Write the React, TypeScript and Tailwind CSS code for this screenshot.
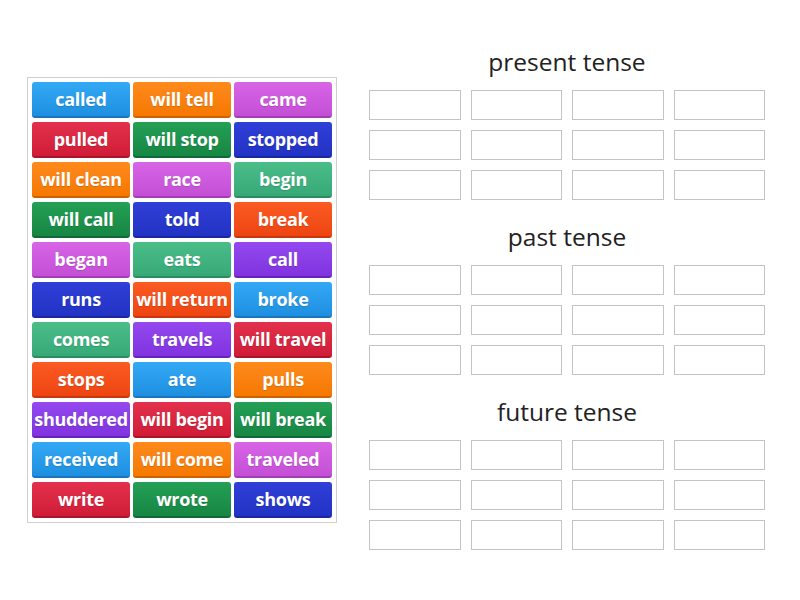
import React from 'react'

type Tone = 'blue' | 'orange' | 'pink' | 'red' | 'green' | 'navy' | 'teal' | 'flame' | 'violet'

const TONES: Record<Tone, string> = {
  blue: 'bg-gradient-to-b from-[#33a9f5] to-[#1e8fe0] border-b-[#1a75bf]',
  orange: 'bg-gradient-to-b from-[#ff8a1c] to-[#f57800] border-b-[#cf6200]',
  pink: 'bg-gradient-to-b from-[#d765e6] to-[#c44fd6] border-b-[#a33db3]',
  red: 'bg-gradient-to-b from-[#e3304c] to-[#d01c37] border-b-[#ab152c]',
  green: 'bg-gradient-to-b from-[#24a055] to-[#178644] border-b-[#116a35]',
  navy: 'bg-gradient-to-b from-[#3040d8] to-[#2232c4] border-b-[#1a27a0]',
  teal: 'bg-gradient-to-b from-[#4bbd89] to-[#37a978] border-b-[#2b8b61]',
  flame: 'bg-gradient-to-b from-[#fb5a22] to-[#ee4512] border-b-[#c7370b]',
  violet: 'bg-gradient-to-b from-[#9448ee] to-[#8033e0] border-b-[#6525b8]',
}

const TILES: [string, Tone][] = [
  ['called', 'blue'], ['will tell', 'orange'], ['came', 'pink'],
  ['pulled', 'red'], ['will stop', 'green'], ['stopped', 'navy'],
  ['will clean', 'orange'], ['race', 'pink'], ['begin', 'teal'],
  ['will call', 'green'], ['told', 'navy'], ['break', 'flame'],
  ['began', 'pink'], ['eats', 'teal'], ['call', 'violet'],
  ['runs', 'navy'], ['will return', 'flame'], ['broke', 'blue'],
  ['comes', 'teal'], ['travels', 'violet'], ['will travel', 'red'],
  ['stops', 'flame'], ['ate', 'blue'], ['pulls', 'orange'],
  ['shuddered', 'violet'], ['will begin', 'red'], ['will break', 'green'],
  ['received', 'blue'], ['will come', 'orange'], ['traveled', 'pink'],
  ['write', 'red'], ['wrote', 'green'], ['shows', 'navy'],
]

const GROUPS = ['present tense', 'past tense', 'future tense']

function Group({ title }: { title: string }) {
  return (
    <div className="flex flex-col">
      <h2 className="h-[48px] pt-[5px] text-center text-[24.5px] leading-[30px] text-[#222]">{title}</h2>
      <div className="grid grid-cols-4 gap-x-[10px] gap-y-[10px]">
        {Array.from({ length: 12 }).map((_, i) => (
          <div key={i} className="h-[30px] border border-[#c4c4c4] bg-white" />
        ))}
      </div>
    </div>
  )
}

export default function App() {
  return (
    <div className="w-[800px] h-[600px] bg-white font-['Open_Sans',sans-serif] flex">
      {/* Word tiles */}
      <div className="ml-[27px] mt-[77px] self-start w-[310px] border border-[#d0d0d0] p-[4px]">
        <div className="grid grid-cols-3 gap-x-[3px] gap-y-[4px]">
          {TILES.map(([word, tone]) => (
            <div
              key={word}
              className={`h-[36px] rounded-[3px] border-b-2 flex items-center justify-center text-white text-[18px] font-bold tracking-[-0.3px] whitespace-nowrap [text-shadow:0_1px_1px_rgba(0,0,0,0.15)] ${TONES[tone]}`}
            >
              {word}
            </div>
          ))}
        </div>
      </div>

      {/* Groups */}
      <div className="ml-[32px] mt-[42px] w-[396px] flex flex-col gap-[17px]">
        {GROUPS.map((g) => (
          <Group key={g} title={g} />
        ))}
      </div>
    </div>
  )
}
